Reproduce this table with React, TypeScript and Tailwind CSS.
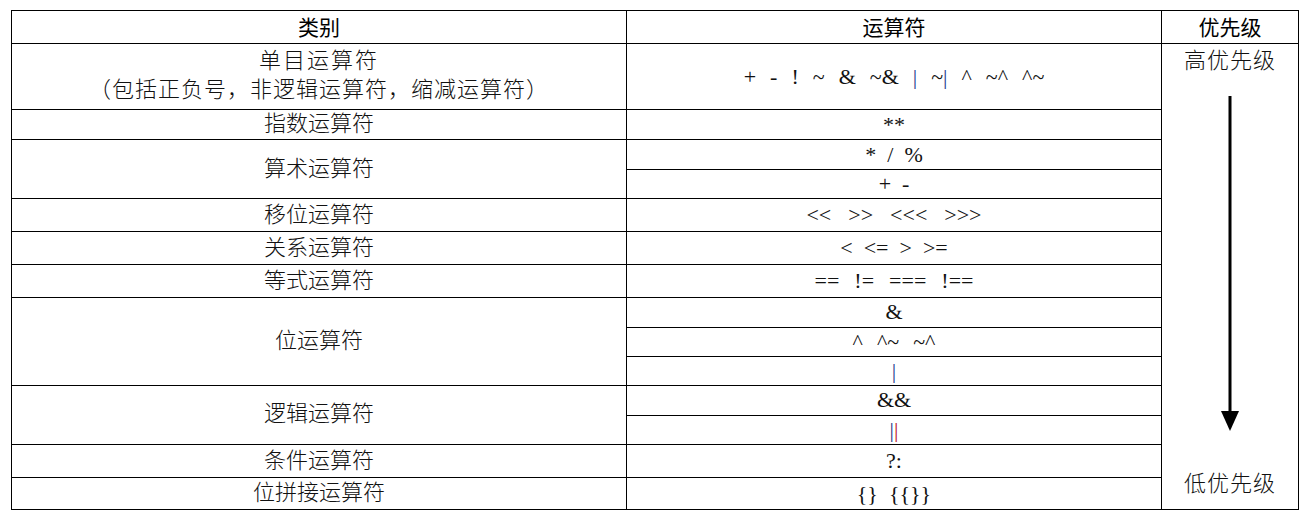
import type { ReactNode } from 'react';

const zh = "font-['Noto_Sans_CJK_SC',sans-serif]";
const op = "font-['Liberation_Serif','Noto_Sans_CJK_SC',serif]";

const Bar = ({ children }: { children: ReactNode }) => <span className="text-[#1e3a8a]">{children}</span>;

function Cat({ children, rows }: { children: ReactNode; rows?: number }) {
  return (
    <td
      rowSpan={rows}
      className={`border border-black p-0 pb-[7px] text-center align-middle text-[22px] leading-[22px] font-light text-[#111] ${zh}`}
    >
      {children}
    </td>
  );
}

function Op({ children, className = '' }: { children: ReactNode; className?: string }) {
  return (
    <td
      className={`border border-black p-0 text-center align-middle whitespace-pre text-[22px] leading-[26px] text-[#111] ${op} ${className}`}
    >
      {children}
    </td>
  );
}

function PriorityArrow() {
  return (
    <svg width="20" height="335" viewBox="0 0 20 335" className="mt-[24px]">
      <line x1="10" y1="0" x2="10" y2="318" stroke="#000" strokeWidth="3" />
      <polygon points="1,315 19,315 10,335" fill="#000" />
    </svg>
  );
}

export default function App() {
  return (
    <div className="w-[1308px] h-[523px] bg-white pl-[11px] pt-[10px]">
      <table className="border-collapse table-fixed w-[1287px]">
        <colgroup>
          <col className="w-[615px]" />
          <col className="w-[535px]" />
          <col className="w-[137px]" />
        </colgroup>
        <tbody>
          <tr className="h-[33px]">
            <th className={`border border-black p-0 pb-[3px] text-[21px] font-normal leading-[26px] text-black ${zh}`}>类别</th>
            <th className={`border border-black p-0 pb-[3px] text-[21px] font-normal leading-[26px] text-black ${zh}`}>运算符</th>
            <th className={`border border-black p-0 pb-[3px] text-[21px] font-normal leading-[26px] text-black ${zh}`}>优先级</th>
          </tr>
          <tr className="h-[65px]">
            <Cat>
              <div className="leading-[29px] tracking-[2px]">单目运算符</div>
              <div className="leading-[29px] tracking-[1px]">（包括正负号，非逻辑运算符，缩减运算符）</div>
            </Cat>
            <Op className="[word-spacing:1.5px]">
              {'+  -  !  ~  &  ~&  '}
              <Bar>|</Bar>
              {'  ~'}
              <Bar>|</Bar>
              {'  ^  ~^  ^~'}
            </Op>
            <td rowSpan={14} className="border border-black p-0 align-top">
              <div className={`h-[465px] flex flex-col items-center text-[22px] leading-[28px] font-light text-[#111] ${zh}`}>
                <div className="tracking-[1px]">高优先级</div>
                <PriorityArrow />
                <div className="mt-[36px] tracking-[1px]">低优先级</div>
              </div>
            </td>
          </tr>
          <tr className="h-[30px]">
            <Cat>指数运算符</Cat>
            <Op>**</Op>
          </tr>
          <tr className="h-[30px]">
            <Cat rows={2}>算术运算符</Cat>
            <Op>{'*  /  %'}</Op>
          </tr>
          <tr className="h-[29px]">
            <Op>{'+  -'}</Op>
          </tr>
          <tr className="h-[33px]">
            <Cat>移位运算符</Cat>
            <Op className="[word-spacing:3px]">{'<<  >>  <<<  >>>'}</Op>
          </tr>
          <tr className="h-[33px]">
            <Cat>关系运算符</Cat>
            <Op>{'<  <=  >  >='}</Op>
          </tr>
          <tr className="h-[33px]">
            <Cat>等式运算符</Cat>
            <Op className="[word-spacing:2px]">{'==  !=  ===  !=='}</Op>
          </tr>
          <tr className="h-[29px]">
            <Cat rows={3}>位运算符</Cat>
            <Op>&amp;</Op>
          </tr>
          <tr className="h-[29px]">
            <Op className="[word-spacing:1.5px]">{'^  ^~  ~^'}</Op>
          </tr>
          <tr className="h-[29px]">
            <Op>
              <Bar>|</Bar>
            </Op>
          </tr>
          <tr className="h-[30px]">
            <Cat rows={2}>逻辑运算符</Cat>
            <Op>&amp;&amp;</Op>
          </tr>
          <tr className="h-[29px]">
            <Op>
              <Bar>|</Bar>
              <span className="text-[#b91c1c]">|</span>
            </Op>
          </tr>
          <tr className="h-[33px]">
            <Cat>条件运算符</Cat>
            <Op>?:</Op>
          </tr>
          <tr className="h-[32px]">
            <Cat>位拼接运算符</Cat>
            <Op>{'{}  {{}}'}</Op>
          </tr>
        </tbody>
      </table>
    </div>
  );
}
